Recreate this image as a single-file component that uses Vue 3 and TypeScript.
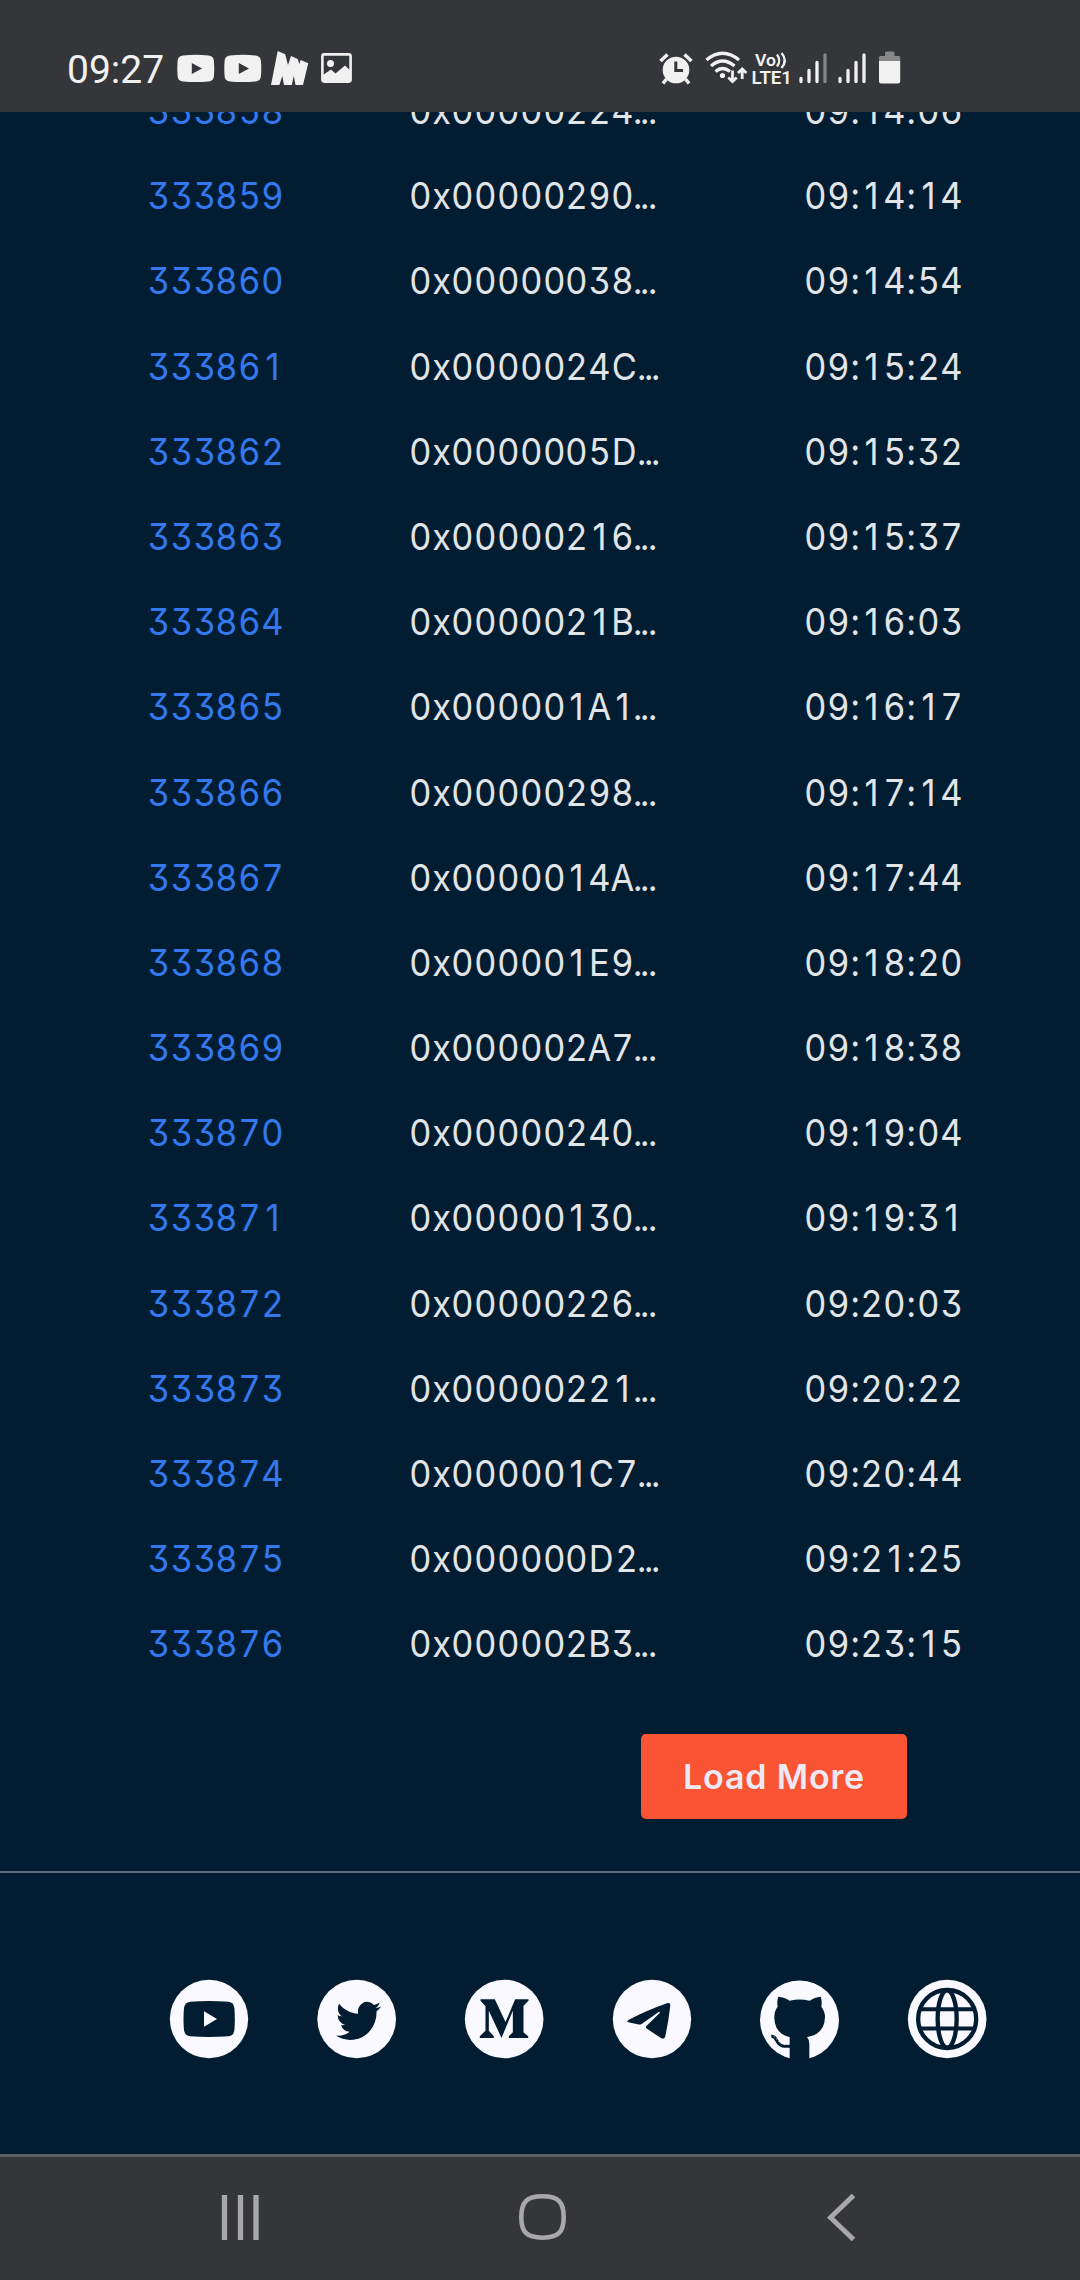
<script setup lang="ts">
interface Block {
  height: string
  hash: string
  time: string
}

const entries: [string, string][] = [
  ['0x00000224...', '09:14:06'],
  ['0x00000290...', '09:14:14'],
  ['0x00000038...', '09:14:54'],
  ['0x0000024C...', '09:15:24'],
  ['0x0000005D...', '09:15:32'],
  ['0x00000216...', '09:15:37'],
  ['0x0000021B...', '09:16:03'],
  ['0x000001A1...', '09:16:17'],
  ['0x00000298...', '09:17:14'],
  ['0x0000014A...', '09:17:44'],
  ['0x000001E9...', '09:18:20'],
  ['0x000002A7...', '09:18:38'],
  ['0x00000240...', '09:19:04'],
  ['0x00000130...', '09:19:31'],
  ['0x00000226...', '09:20:03'],
  ['0x00000221...', '09:20:22'],
  ['0x000001C7...', '09:20:44'],
  ['0x000000D2...', '09:21:25'],
  ['0x000002B3...', '09:23:15'],
]

const blocks: Block[] = entries.map(([hash, time], i) => ({ height: String(333858 + i), hash, time }))

function kind(ch: string): string {
  if (ch === '.') return 'dot'
  if (ch === ':') return 'colon'
  if (ch === 'x') return 'ex'
  if (ch === 'C' || ch === 'D') return 'wide'
  return 'digit'
}
</script>

<template>
  <div class="screen">
    <header class="status">
      <span class="clock">09:27</span>
      <svg v-for="n in 2" :key="n" class="yt" width="38" height="40" viewBox="0 0 38 40">
        <path fill="#f1f1f1" fill-rule="evenodd" d="M6 5.4Q19 4.2 31.5 5.4Q36.3 6 36.9 10.500Q37.600 18.500 36.900 26.500Q36.300 31 31.500 31.500Q19 32.600 6 31.500Q1.200 31 .6 26.500Q0 18.500 .6 10.500Q1.200 6 6 5.400ZM14.800 13V24L25 18.500Z" />
      </svg>
      <svg class="mm" width="38" height="40" viewBox="0 0 38 40">
        <path fill="#f1f1f1" d="M6.700 1L14.200 4.300L17 15L20 6L26.700 9L28.300 14L29.700 10L37.200 13.300L32 35H24.500L22.800 26L20.800 35H13L11.300 26L8.400 35H0Z" />
      </svg>
      <svg class="pic" width="32" height="40" viewBox="0 0 32 40">
        <rect x="1.400" y="4.400" width="28.200" height="27.200" rx="2" fill="none" stroke="#f1f1f1" stroke-width="2.600" />
        <circle cx="9.500" cy="13.500" r="3.500" fill="#f1f1f1" />
        <path fill="#f1f1f1" d="M2 25L10 19.500L14.500 23.500L24 15.500L30 21V32H2Z" />
      </svg>
      <svg class="alarm" width="34" height="40" viewBox="0 0 34 40">
        <circle cx="17" cy="20" r="13.300" fill="#f1f1f1" />
        <path d="M1.500 11L8.500 4.500M32.500 11L25.500 4.500M7.500 29L4 33.500M26.500 29L30 33.500" stroke="#f1f1f1" stroke-width="3.600" />
        <path d="M16.800 11.500V20.500H24" fill="none" stroke="#353639" stroke-width="3" />
      </svg>
      <svg class="wifi" width="43" height="40" viewBox="0 0 43 40" fill="none" stroke="#f1f1f1" stroke-width="3.300">
        <path d="M1.500 10Q17.500-3.500 34 10M6 16Q17.500 6 29.500 16M10.500 21.500Q17.500 15.500 25 21.500" />
        <circle cx="17.500" cy="25.500" r="2.600" fill="#f1f1f1" stroke="none" />
        <path d="M27.500 20.500V31M23.300 27.500L27.500 31.500L31.700 27.500M37.200 29V19.500M33 23L37.200 19L41.400 23" stroke-width="2.800" />
      </svg>
      <svg class="volte" width="40" height="40" viewBox="0 0 40 40">
        <g fill="#f1f1f1" font-family="Roboto, sans-serif" font-weight="600">
          <text x="3" y="16" font-size="17" textLength="21" lengthAdjust="spacingAndGlyphs">Vo</text>
          <text x="-.5" y="34" font-size="18.300" textLength="40.500" lengthAdjust="spacingAndGlyphs">LTE1</text>
        </g>
        <path d="M25 4.500Q29.500 10.500 25 16.500M29.500 3Q36 10.500 29.500 18" fill="none" stroke="#f1f1f1" stroke-width="2.300" />
      </svg>
      <svg v-for="n in 2" :key="'s' + n" class="signal" width="28" height="40" viewBox="0 0 28 40" stroke="#f1f1f1" stroke-width="3.300" stroke-linecap="round">
        <path d="M2 28.500V31.500M10 20.500V31.500M18 12.500V31.500" />
        <path d="M26 5V31.500" :stroke="n === 1 ? '#858687' : '#f1f1f1'" />
      </svg>
      <svg class="battery" width="22" height="40" viewBox="0 0 22 40">
        <path fill="#868788" d="M6 3Q6 1.500 7.500 1.500H14Q15.500 1.500 15.500 3V6H20Q21.200 6 21.200 7.500V12H0V7.500Q0 6 1.500 6H6Z" />
        <path fill="#f1f1f1" d="M0 11H21.200V31.500Q21.200 33.500 19.200 33.500H2Q0 33.500 0 31.500Z" />
      </svg>
    </header>

    <main class="page">
      <div class="table">
        <div v-for="b in blocks" :key="b.height" class="row">
          <a class="height"><span v-for="(ch, i) in b.height" :key="i" :class="kind(ch)">{{ ch }}</span></a>
          <span class="hash"><span v-for="(ch, i) in b.hash" :key="i" :class="kind(ch)">{{ ch }}</span></span>
          <span class="time"><span v-for="(ch, i) in b.time" :key="i" :class="kind(ch)">{{ ch }}</span></span>
        </div>
      </div>
      <button class="more">Load More</button>
    </main>

    <footer class="social">
      <svg viewBox="57 57 240 240">
        <circle cx="177" cy="177" r="117.500" fill="#f9f9ff" />
        <path fill="#021d31" d="M120 125Q177 121 236 125Q251 127 253 143Q256 177 253 211Q251 227 236 229Q177 233 120 229Q105 227 102 211Q99 177 102 143Q105 127 120 125Z" />
        <path fill="#f9f9ff" d="M162 154V200L201 177Z" />
      </svg>
      <svg viewBox="501 57 240 240">
        <circle cx="620" cy="177" r="118" fill="#f9f9ff" />
        <path fill="#021d31" transform="translate(558 112.500) scale(5.640 5.850)" d="M23.953 4.570a10 10 0 01-2.825.775 4.958 4.958 0 002.163-2.723c-.951.555-2.005.959-3.127 1.184a4.920 4.920 0 00-8.384 4.482C7.690 8.095 4.067 6.130 1.640 3.162a4.822 4.822 0 00-.666 2.475c0 1.710.870 3.213 2.188 4.096a4.904 4.904 0 01-2.228-.616v.060a4.923 4.923 0 003.946 4.827 4.996 4.996 0 01-2.212.085 4.936 4.936 0 004.604 3.417 9.867 9.867 0 01-6.102 2.105c-.390 0-.779-.023-1.170-.067a13.995 13.995 0 007.557 2.209c9.053 0 13.998-7.496 13.998-13.985 0-.210 0-.420-.015-.630A9.935 9.935 0 0024 4.590z" />
      </svg>
      <svg viewBox="43.500 57 240 240">
        <circle cx="164" cy="177" r="118" fill="#f9f9ff" />
        <path fill="#021d31" d="M93 118H136L168 186L197 118H237V122L222 137V217L236 229V234H178V229L190 217V152L156 234L118 152V212L133 229V234H91V229L108 212V139L93 122Z" />
      </svg>
      <svg viewBox="486 57 240 240">
        <circle cx="606" cy="177" r="117.500" fill="#f9f9ff" />
        <path fill="#021d31" d="M535 180Q590 151 653 129Q661 127 661 136Q655 190 645 232Q641 239 634 235L589 205Q586 201 590 197L629 159Q631 154 626 156L576 191Q570 195 563 193L535 187Q529 184 535 180Z" />
      </svg>
      <svg viewBox="60 57 240 240">
        <circle cx="178.500" cy="180" r="118.500" fill="#f9f9ff" />
        <path fill="#021d31" d="M115 110Q134 111 149 122Q179 115 209 122Q224 111 242 110Q247 124 244 140Q255 154 255 172Q253 224 201 231Q208 239 208 251V300H149V231Q105 222 103 175Q102 154 113 140Q110 124 115 110Z" />
        <path d="M94 229Q103 228 109 240Q119 260 137 259H151" fill="none" stroke="#021d31" stroke-width="9" />
        <path d="M101 229L113 240Q122 254 137 254H147" fill="none" stroke="#f9f9ff" stroke-width="2" stroke-dasharray="4 6" />
      </svg>
      <svg viewBox="502 57 240 240">
        <circle cx="622.500" cy="177" r="118" fill="#f9f9ff" />
        <g fill="none" stroke="#021d31" stroke-width="13">
          <circle cx="622.500" cy="177" r="87" />
          <ellipse cx="622.500" cy="177" rx="28.500" ry="86" />
          <path d="M541 148H704M541 205.500H704" stroke-width="12" />
        </g>
      </svg>
    </footer>

    <nav class="nav">
      <svg class="recents" width="38" height="48" viewBox="0 0 38 48"><path d="M3.500 1V46M19.500 1V46M35 1V46" stroke="#a8a8aa" stroke-width="5.300" /></svg>
      <svg class="home" width="48" height="48" viewBox="0 0 48 48"><path d="M23.500 2.300C39.500 2.300 44.700 8 44.700 23S39.500 43.700 23.500 43.700S2.300 38 2.300 23S7.500 2.300 23.500 2.300Z" fill="none" stroke="#a8a8aa" stroke-width="4.600" /></svg>
      <svg class="back" width="30" height="48" viewBox="0 0 30 48"><path d="M26.500 1.500L3.500 23.500L26.500 45.500" fill="none" stroke="#a8a8aa" stroke-width="5" /></svg>
    </nav>
  </div>
</template>

<style scoped>
.screen {
  display: flex;
  flex-direction: column;
  width: 1080px;
  height: 2280px;
  overflow: hidden;
  background: #021d31;
  font-family: Inter, sans-serif;
}
.status {
  display: flex;
  flex: none;
  box-sizing: border-box;
  height: 112px;
  padding: 50px 0 0 67px;
  background: #353639;
}
.status svg {
  flex: none;
}
.clock {
  width: 110px;
  font: 400 39px/40px Roboto, sans-serif;
  color: #f1f1f1;
}
.yt {
  margin-right: 9px;
}
.mm {
  margin-right: 12px;
}
.pic {
  margin-right: 306px;
}
.alarm {
  margin-right: 12px;
}
.wifi {
  margin-right: 4px;
}
.volte {
  margin-right: 7px;
  overflow: visible;
}
.signal {
  margin-right: 11px;
}
.battery {
  margin-left: 2px;
}
.page {
  display: flex;
  flex: none;
  flex-direction: column;
  box-sizing: border-box;
  height: 1761px;
  overflow: hidden;
  border-bottom: 2px solid #5b6c79;
}
.table {
  flex: none;
  margin-top: -43.600px;
  font-size: 37px;
  font-weight: 380;
  font-feature-settings: "cv09";
  color: #e2e5e8;
}
.row {
  display: grid;
  grid-template-columns: 262px 395px 1fr;
  align-items: center;
  height: 85.200px;
  padding-left: 147px;
  line-height: 44px;
  white-space: nowrap;
}
.digit,
.colon,
.ex,
.wide,
.dot {
  display: inline-flex;
  justify-content: center;
  width: 22.830px;
  transform: scaleX(0.93);
}
.colon {
  width: 10.700px;
}
.ex {
  width: 19.500px;
}
.wide {
  width: 26.500px;
}
.dot {
  width: 7.400px;
}
.height {
  color: #3478ee;
}
.more {
  flex: none;
  width: 266px;
  height: 85px;
  margin: 46.800px 0 0 641px;
  padding: 0;
  border: 0;
  border-radius: 5px;
  background: #f95433;
  color: #f0e9f3;
  font: 600 34px/85px Inter, sans-serif;
  letter-spacing: 0.850px;
  text-align: center;
}
.social {
  display: flex;
  flex: none;
  box-sizing: border-box;
  height: 281px;
  padding: 106px 0 0 169px;
  gap: 67.700px;
}
.social svg {
  flex: none;
  width: 80px;
  height: 80px;
}
.nav {
  display: flex;
  flex: none;
  box-sizing: border-box;
  height: 126px;
  padding: 37px 0 0 221px;
  border-top: 3px solid #5d6067;
  background: #353639;
}
.home {
  margin-left: 260px;
}
.back {
  margin-left: 260px;
}
</style>

<style>
body {
  margin: 0;
  background: #021d31;
}
</style>
